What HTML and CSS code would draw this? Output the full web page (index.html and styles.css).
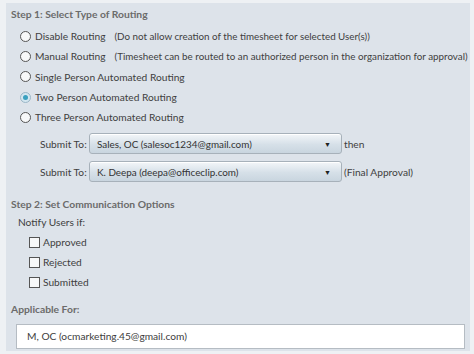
FILE: index.html
```html
<!DOCTYPE html>
<html lang="en">
<head>
    <meta charset="UTF-8">
    <title>Timesheet Routing</title>
    <link rel="stylesheet" href="styles.css">
</head>
<body>
  <div class="panel">

    <div class="step-title">Step 1: Select Type of Routing</div>

    <div class="options">
        <label class="option"><span class="radio"></span>Disable Routing <span class="note">(Do not allow creation of the timesheet for selected User(s))</span></label>
        <label class="option"><span class="radio"></span>Manual Routing <span class="note">(Timesheet can be routed to an authorized person in the organization for approval)</span></label>
        <label class="option"><span class="radio"></span>Single Person Automated Routing</label>
        <label class="option"><span class="radio checked"></span>Two Person Automated Routing</label>
        <label class="option"><span class="radio"></span>Three Person Automated Routing</label>
    </div>

    <div class="submit-rows">
        <div class="submit-row">
            <span class="submit-label">Submit To:</span>
            <div class="select"><span>Sales, OC (salesoc1234@gmail.com)</span><span class="arrow">&#9660;</span></div>
            <span class="after">then</span>
        </div>
        <div class="submit-row">
            <span class="submit-label">Submit To:</span>
            <div class="select"><span>K. Deepa (deepa@officeclip.com)</span><span class="arrow">&#9660;</span></div>
            <span class="after">(Final Approval)</span>
        </div>
    </div>

    <div class="step-title step2">Step 2: Set Communication Options</div>

    <div class="notify">Notify Users if:</div>
    <div class="checks">
        <label class="check"><span class="box"></span>Approved</label>
        <label class="check"><span class="box"></span>Rejected</label>
        <label class="check"><span class="box"></span>Submitted</label>
    </div>

    <div class="step-title step3">Applicable For:</div>
    <div class="applicable">M, OC (ocmarketing.45@gmail.com)</div>

  </div>
</body>
</html>
```

FILE: styles.css
```css
*{
    margin:0;
    padding:0;
    box-sizing:border-box;
}

html{
    font-family: 'Lato', 'Open Sans', sans-serif;
    font-size:10.2px;
    --bg-outer:#eef1f4;
    --bg-panel:#dde3ea;
    --text:#404040;
    --title:#6b6b6b;
    --border:#a7b1ba;
}

body{
    width:474px;
    height:354px;
    background:var(--bg-outer);
    padding:3px 4px 3px 6px;
    overflow:hidden;
}

.panel{
    height:100%;
    background:var(--bg-panel);
    color:var(--text);
    padding:3px 0 0 5px;
}

.step-title{
    font-weight:bold;
    color:var(--title);
    font-size:10.3px;
    height:16px;
    line-height:16px;
    white-space:nowrap;
}

.options{
    display:flex;
    flex-direction:column;
    margin-top:4px;
    padding-left:9px;
}

.option{
    display:flex;
    align-items:center;
    height:20.3px;
    white-space:nowrap;
}

.note{ margin-left:9px; font-size:9.8px; }

.radio{
    flex-shrink:0;
    width:11px;
    height:11px;
    border:1px solid #555;
    border-radius:50%;
    margin-right:4px;
    background:#f7f8f9;
    display:flex;
    align-items:center;
    justify-content:center;
}

.radio.checked{
    border-color:#9ab6c6;
    background:#d3e6f0;
}

.radio.checked::after{
    content:"";
    width:5px;
    height:5px;
    border-radius:50%;
    background:#3aa0bf;
}

.submit-rows{
    display:flex;
    flex-direction:column;
    gap:7px;
    margin-top:6px;
    padding-left:29px;
}

.submit-row{
    display:flex;
    align-items:center;
    white-space:nowrap;
}

.submit-label{ width:49px; flex-shrink:0; }

.select{
    flex-shrink:0;
    width:253px;
    height:21px;
    border:1px solid var(--border);
    border-radius:3px;
    background:linear-gradient(#f3f6f9, #d6e0e8 55%, #c9d5df);
    display:flex;
    align-items:center;
    justify-content:space-between;
    padding:0 10px 0 7px;
    color:#333;
    font-size:9.9px;
    box-shadow:inset 0 1px 0 #fff;
}

.arrow{ font-size:7px; color:#222; }

.after{ margin-left:2px; }

.step2{ margin-top:14px; }

.notify{
    margin-top:2px;
    padding-left:7px;
    height:16px;
    line-height:16px;
}

.checks{
    display:flex;
    flex-direction:column;
    padding-left:18px;
    margin-top:2px;
}

.check{
    display:flex;
    align-items:center;
    height:20px;
}

.box{
    flex-shrink:0;
    width:11px;
    height:11px;
    border:1px solid #555;
    background:#f7f8f9;
    margin-right:3px;
}

.step3{ margin-top:9px; }

.applicable{
    margin:7px 5px 0 5px;
    height:25px;
    background:#fff;
    border:1px solid #b5bcc3;
    padding-left:10px;
    line-height:23px;
}
```
